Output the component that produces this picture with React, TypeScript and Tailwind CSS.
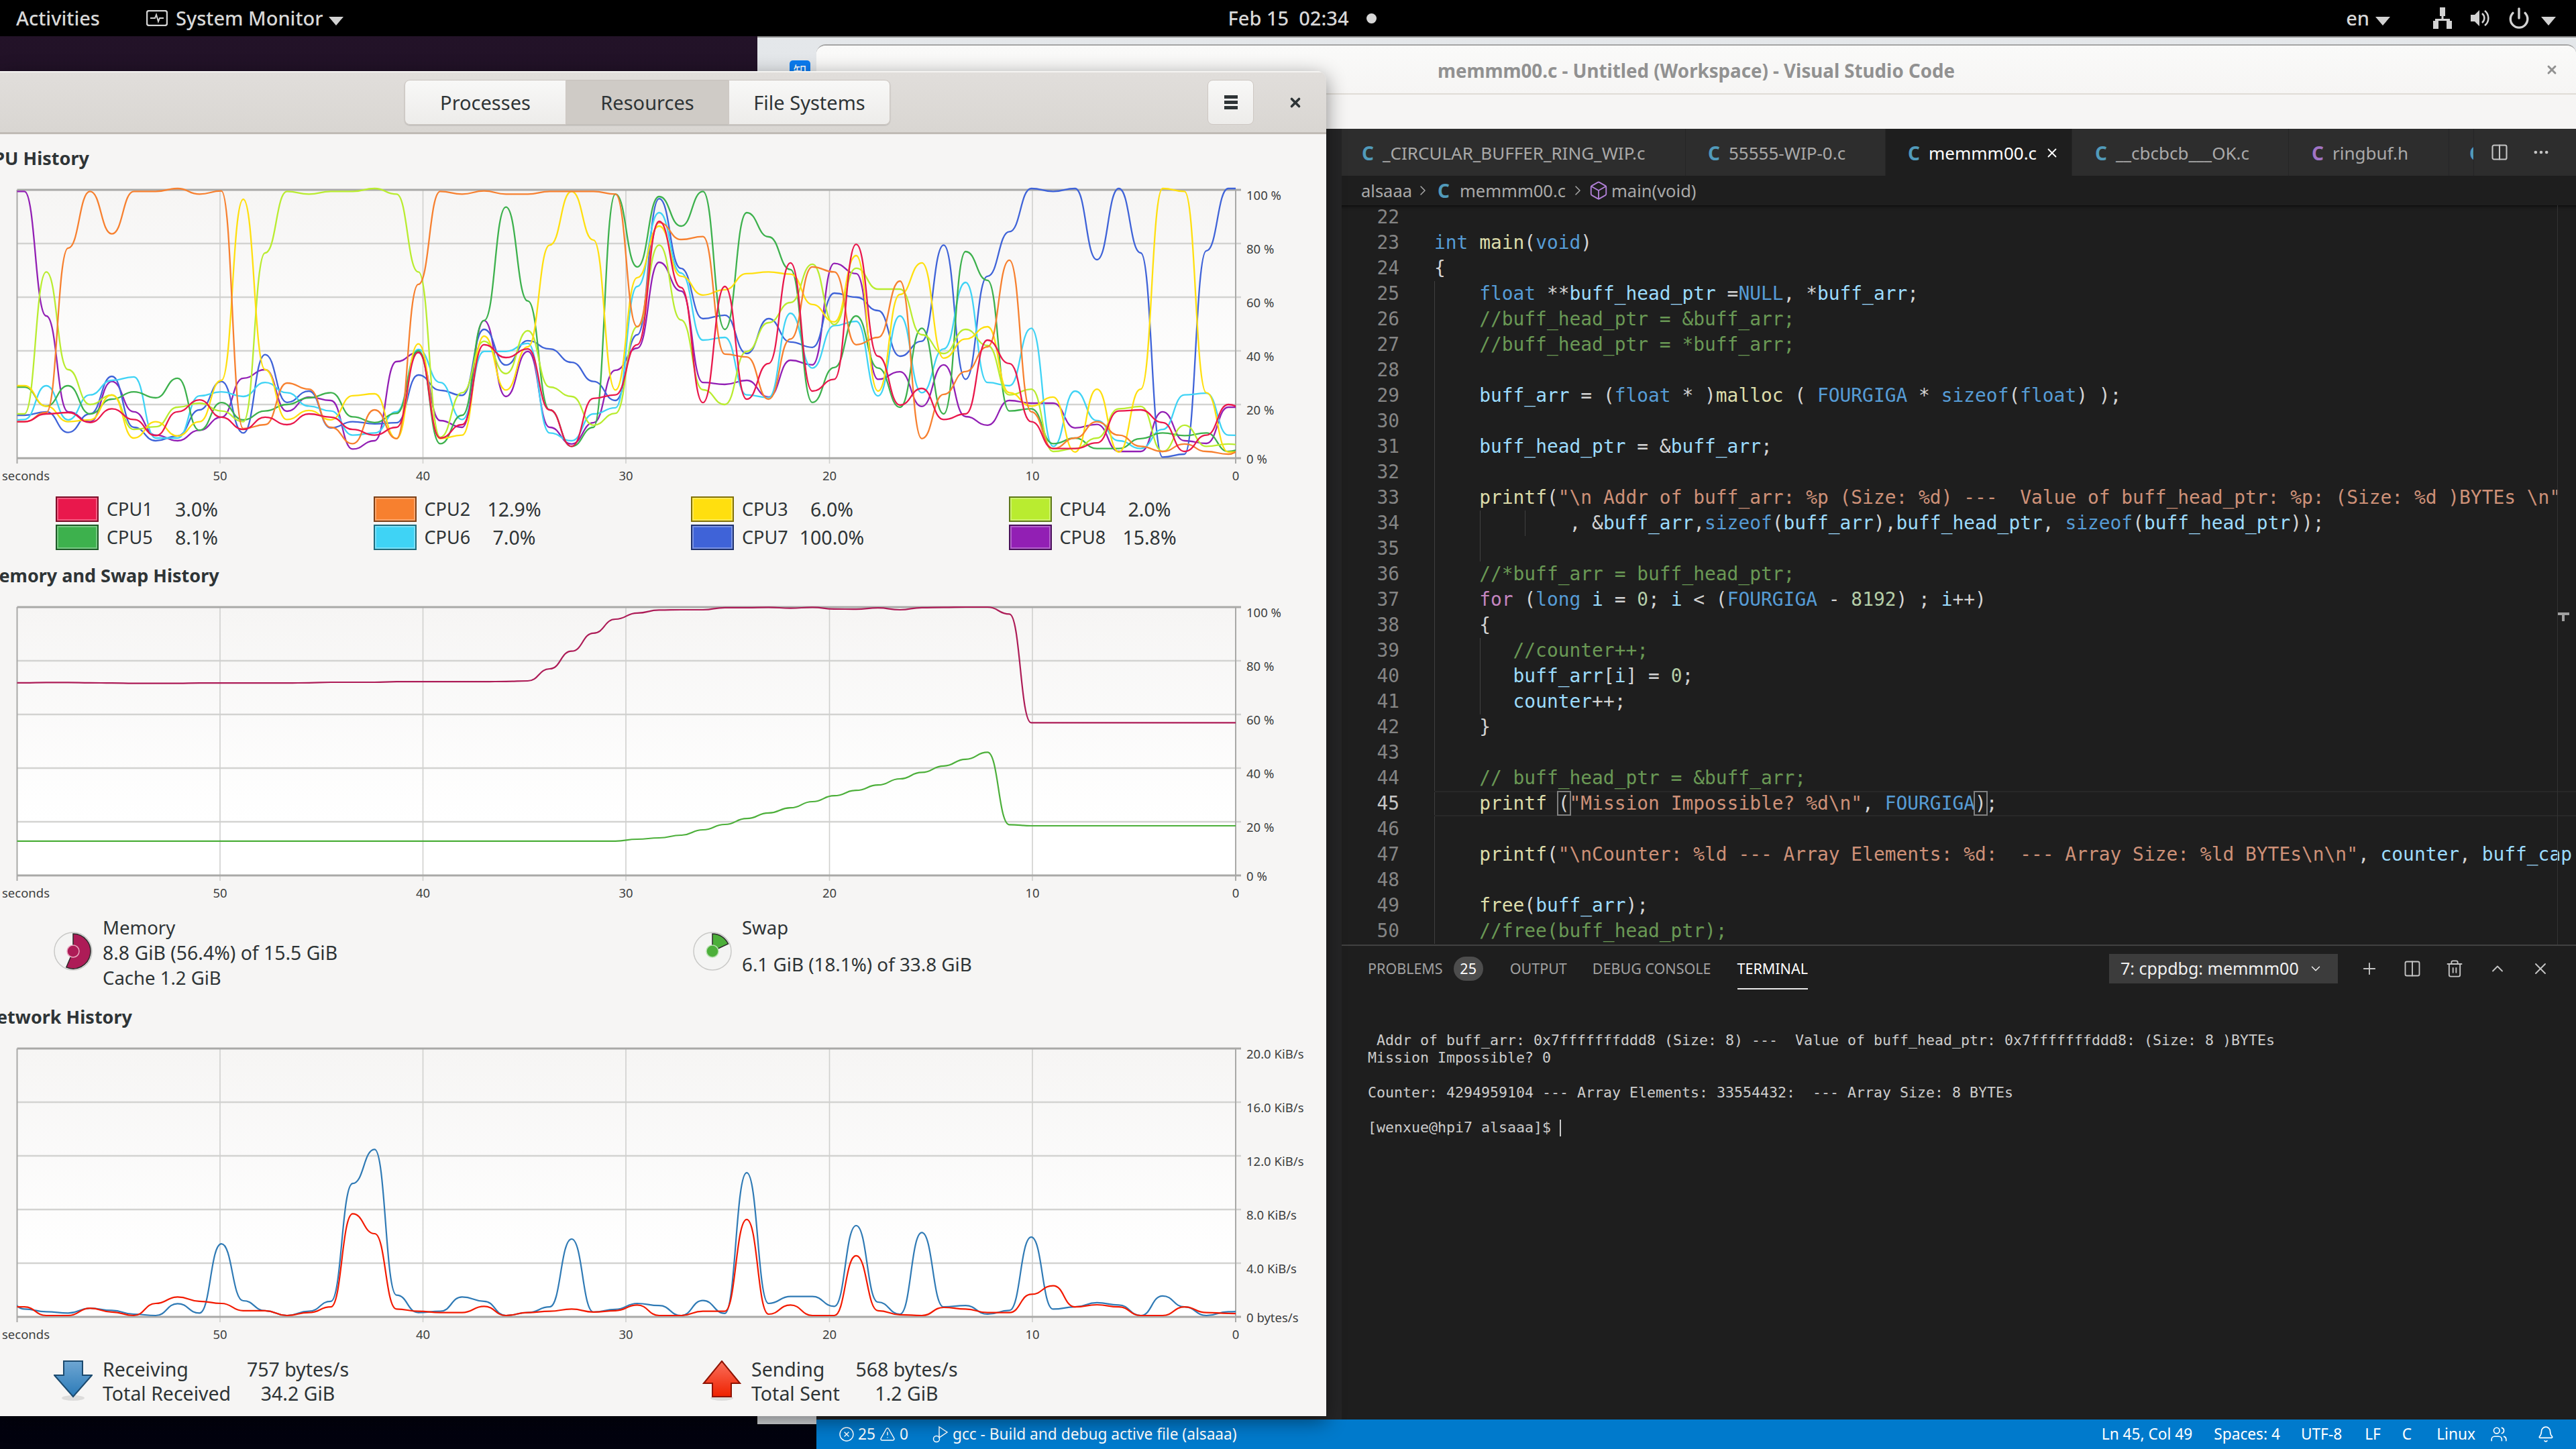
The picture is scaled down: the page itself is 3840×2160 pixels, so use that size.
import { Bell, Box, ChevronDown, ChevronRight, ChevronUp, CircleX, Columns2, Ellipsis, Plus, Power, Trash2, TriangleAlert, Users, X } from "lucide-react";

const cpuSeries = [
  { color: "#921fb4", v: [99.4,99.4,53,17.3,13.6,28.6,17.3,8.6,6.5,10.4,15.3,29.8,33,17.5,22.8,21.5,3.4,6.5,36,39.4,14,11.5,51.3,23,39.8,11.5,5.3,13.2,32.8,41,73,62.3,28.2,27.5,29,22.8,36.5,34.8,72.6,68.8,29.4,32.2,19.3,34.8,15.5,12.3,21.5,20.5,20.5,11.3,12.6,2.5,2.5,17.3,6.5,5.5,19,19] },
  { color: "#3f63d8", v: [16,16,17.3,9.6,16.5,30.5,11.5,6.5,8.3,18,28.6,9.4,38.6,20.8,25,11.3,13.6,12.8,13.2,31,25.3,23.4,48,34.7,43.8,40.7,35.7,28.6,21.5,46,96.7,70.7,52,53.3,39,52,43.3,41.3,61.5,60,55,38,43.6,79.4,29.4,67.8,84.4,100.5,99.4,100.5,74,100.5,76.5,0.4,1.5,77.3,100.5,100.5] },
  { color: "#3fd3f5", v: [13.6,14.4,27,14.3,23.6,29,30.3,7.5,7.5,23.2,24.7,23,28.2,24.4,19.4,17.6,8.6,9.4,17.3,40.5,28.2,14.4,39.8,39.8,42.8,9.4,6.5,16.5,18.8,64,91.5,69,44,45,23.6,22.6,54,33.6,49.4,51,23.2,53,24.4,40.7,65.5,28.2,27,48.4,4.4,25,14,6.5,3.6,10.7,23.6,24.2,8.6,8.2] },
  { color: "#3db14d", v: [26.5,26.5,19.4,27,16.5,22,24.7,22.5,29.8,10.4,20.7,14.3,17.6,20,22.5,24.4,15.4,13.3,16.7,40,5.4,16,51.3,93.6,58.6,18,4.4,11.5,98.4,71.3,97.5,86.5,99.4,48,91.5,82.5,70.3,20.8,33.8,53,33.6,19,48.4,16.5,77,66.3,17.6,18.4,5.4,7.5,3.6,3.6,7.3,9.4,8.4,9.4,2.5,4.4] },
  { color: "#b9ec30", v: [16.5,16.5,69.4,33,20,23.5,10.7,11.7,19,20.5,17.6,13.6,76.5,99.4,98.4,99.4,99.4,100.5,98.4,69.4,7.8,24.4,43.6,31.5,47.5,26.5,23,12.3,16.7,49,79.4,51.5,25.5,20,39.8,50.5,58,72.3,49.8,70.8,63,63,46,39,48,42,23.6,25.7,2.5,3.6,7.5,18.4,19.3,2.5,12.3,4.4,5.3,4.4] },
  { color: "#ffdf0f", v: [27,27,19.4,13.6,14.3,23.6,7.5,13.6,8.3,13.6,29,96.5,33,14.4,17.8,14.3,23.3,24,7.3,42.6,7.3,8.6,45.5,25.4,41.5,79.4,99.4,81.3,25.4,67.3,86.5,67.8,60.8,62.8,68.8,69.4,68.6,57.3,50.8,75.5,25,61,72.8,37.3,44.4,49,24.4,19.4,22.8,2.3,25.7,2.3,25.7,100.5,99.4,24.4,2.3,2.3] },
  { color: "#f7802f", v: [13.6,13.6,17,78.3,99.4,83.6,99.4,99.4,100.5,98.4,99.6,11,12.5,28,25.7,11.5,5.4,18,7.3,64.8,99.4,98.4,99.6,98.4,98.4,99.4,99.4,99.4,98.4,49,87.8,81.5,82.6,38.8,37.7,22,44.4,71.3,69.4,42.3,45,66,7.3,23.8,32.3,41.5,73.8,17.3,3.6,7.5,13.6,8.6,4.4,2.5,5.3,2.5,1.5,5.6] },
  { color: "#e9184c", v: [13.6,13.6,16.5,17,13.3,18.4,14.4,8.4,17.3,21.7,15.3,10.7,15.3,12.5,16.5,15.3,10.7,8.6,11.5,39.4,7.5,12.5,42.3,37.5,40.7,18,4.4,22.3,23.6,42.3,88.3,63.6,20.7,64,22,35.3,72.8,25,29.4,79.7,38,19.8,26,14.4,16.5,44,35.3,13.6,3.6,3.6,5.7,17.6,18,13.3,2.5,8.6,20,17] },
];

const memoryValues = [71.8,71.8,71.9,71.9,71.8,71.7,71.6,71.6,71.6,71.7,71.7,71.7,71.7,71.7,71.8,72,72,72,72.2,72.2,72.2,72.2,72.2,72.3,72.5,77,83.6,90.3,95.5,97.8,98.9,99,99,99.8,99.8,99.9,99.6,99.9,99.3,99.2,99.7,99,99.8,99.9,100,100,97.4,56.9,56.9,56.9,56.9,56.9,56.9,56.9,56.9,56.9,56.9,56.9];
const swapValues = [12.8,12.8,12.8,12.8,12.8,12.8,12.8,12.8,12.8,12.8,12.8,12.8,12.8,12.8,12.8,12.8,12.8,12.8,12.8,12.8,12.8,12.8,12.8,12.8,12.8,12.8,12.8,12.8,12.8,13.5,14,15,17,19,21.2,23.3,25.2,27.5,29.7,31.7,33.7,36,38.4,40.8,43.3,45.9,18.9,18.5,18.5,18.5,18.5,18.5,18.5,18.5,18.5,18.5,18.5,18.5];
const recvValues = [8.9,2.9,1.9,1.4,3.2,2.4,1,0.5,4.9,1.4,27.2,6,2.3,0.5,2.1,5.8,49.7,62.4,8.1,1.6,2.1,7.4,5.8,0.5,1.6,3.7,29,1.8,2.8,5,4.2,0.5,6.1,1.3,53.7,5,7.6,7.6,3.9,34,5.5,1,31.4,3.7,4.2,1,2.4,29.7,2.9,3.7,5.3,4.4,0.5,7.8,3.7,0.5,1.9,2.3];
const sentValues = [3.7,3.7,0.5,0.5,3.2,1.8,0.5,5,7.4,5.8,5,2.3,2.3,0.5,1.6,3.7,38.4,31,2.9,2.1,1.6,1.6,3.9,0.5,1.6,2.1,2.9,1.8,2.3,4.4,0.5,0.5,2.1,2.1,36.3,1,4.4,0.5,0.5,22.8,2.3,0.8,0.5,3.5,2.9,1.6,1.6,8.4,11.6,3.7,4.5,3.7,0.5,0.5,3.7,1.6,1.3,1];

const curvePath = (values: number[]) => {
  const dx = 32.63;
  let d = "";
  values.forEach((v, i) => {
    const x = 3.7 + dx * i;
    const y = 400 - v * 4;
    if (i === 0) {
      d = `M${x} ${y}`;
    } else {
      const px = x - dx;
      const py = 400 - values[i - 1] * 4;
      d += ` C${px + dx / 2} ${py} ${x - dx / 2} ${y} ${x} ${y}`;
    }
  });
  return d;
};

const Chart = ({ id, labels, series, width }: { id: string; labels: string[]; series: { color: string; v: number[] }[]; width: number }) => {
  const vlines = [25.5, 328, 630.5, 933, 1236.5, 1539, 1842];
  const times = ["60 seconds", "50", "40", "30", "20", "10", "0"];
  return (
    <svg width="1977" height="440" className="block overflow-visible shrink-0">
      <defs>
        <linearGradient id={`bg-${id}`} x1="0" y1="0" x2="0" y2="1">
          <stop offset="0" stopColor="#f6f5f4" />
          <stop offset="0.8" stopColor="#ffffff" />
        </linearGradient>
        <clipPath id={`clip-${id}`}>
          <rect x="25.5" y="-12" width="1816.5" height="424" />
        </clipPath>
      </defs>
      <rect x="25.5" y="0" width="1816.5" height="400" fill={`url(#bg-${id})`} />
      {[80, 160, 240, 320].map((y) => (
        <line key={y} x1="25.5" x2="1850" y1={y} y2={y} stroke="#d3d3d1" strokeWidth="2.5" />
      ))}
      {vlines.slice(1, 6).map((x) => (
        <line key={x} x1={x} x2={x} y1="0" y2="408" stroke="#d0d0ce" strokeWidth="1.6" />
      ))}
      <line x1="25.5" x2="25.5" y1="0" y2="408" stroke="#a9a9a7" strokeWidth="2" />
      <line x1="1842" x2="1842" y1="0" y2="408" stroke="#a9a9a7" strokeWidth="2" />
      <line x1="25.5" x2="1850" y1="0" y2="0" stroke="#a9a9a7" strokeWidth="3" />
      <line x1="25.5" x2="1850" y1="400" y2="400" stroke="#a9a9a7" strokeWidth="3" />
      <g clipPath={`url(#clip-${id})`}>
        {series.map((s) => (
          <path key={s.color} d={curvePath(s.v)} fill="none" stroke={s.color} strokeWidth={width} />
        ))}
      </g>
      {labels.map((t, i) => (
        <text key={t} x="1858" y={i === 5 ? 408 : 15 + i * 80} fontSize="18.5" fill="#3d3f40">
          {t}
        </text>
      ))}
      {times.map((t, i) => (
        <text key={t} x={vlines[i]} y="433" fontSize="18.5" fill="#3d3f40" textAnchor="middle">
          {t}
        </text>
      ))}
    </svg>
  );
};

const Heading = ({ children }: { children: string }) => (
  <div className="h-[83px] shrink-0 pb-[11px] -ml-[27px] flex items-center font-bold text-[27px] text-[#2e3436] whitespace-nowrap">{children}</div>
);

const legend = [
  { name: "CPU1", val: "3.0%", fill: "bg-[#e9184c]", dark: "border-[#7c0d28]", light: "border-[#f25d82]" },
  { name: "CPU2", val: "12.9%", fill: "bg-[#f7802f]", dark: "border-[#7c4017]", light: "border-[#f9a66d]" },
  { name: "CPU3", val: "6.0%", fill: "bg-[#ffdf0f]", dark: "border-[#807008]", light: "border-[#ffe957]" },
  { name: "CPU4", val: "2.0%", fill: "bg-[#b9ec30]", dark: "border-[#5d7618]", light: "border-[#cef26e]" },
  { name: "CPU5", val: "8.1%", fill: "bg-[#3db14d]", dark: "border-[#1e5927]", light: "border-[#77c983]" },
  { name: "CPU6", val: "7.0%", fill: "bg-[#3fd3f5]", dark: "border-[#206a7b]", light: "border-[#79e0f8]" },
  { name: "CPU7", val: "100.0%", fill: "bg-[#3f63d8]", dark: "border-[#20326c]", light: "border-[#7992e4]" },
  { name: "CPU8", val: "15.8%", fill: "bg-[#921fb4]", dark: "border-[#49105a]", light: "border-[#b362cb]" },
];

const Pie = ({ color, ring, angle }: { color: string; ring: string; angle: number }) => {
  const r = 26;
  const a = (angle * Math.PI) / 180;
  const ex = 29 + r * Math.sin(a);
  const ey = 29 - r * Math.cos(a);
  return (
    <svg width="58" height="58" viewBox="0 0 58 58" className="shrink-0">
      <circle cx="29" cy="29" r="28" fill="#f4f4f3" stroke="#c9c9c7" strokeWidth="1.5" />
      <path d={`M29 29 L29 3 A${r} ${r} 0 ${angle > 180 ? 1 : 0} 1 ${ex} ${ey} Z`} fill={color} stroke="#2b2b2b" strokeWidth="1.5" />
      <circle cx="29" cy="29" r="9" fill={color} stroke={ring} strokeWidth="1.5" />
    </svg>
  );
};

const Arrow = ({ down }: { down: boolean }) => (
  <svg width="58" height="62" viewBox="0 0 58 62" className="shrink-0">
    <defs>
      <linearGradient id={down ? "arrow-d" : "arrow-u"} x1="0" y1="0" x2="0" y2="1">
        <stop offset="0" stopColor={down ? "#6ea6d2" : "#f9705c"} />
        <stop offset="1" stopColor={down ? "#2b7ab8" : "#ef2100"} />
      </linearGradient>
    </defs>
    <ellipse cx="29" cy="56" rx="17" ry="4" fill="#000000" opacity="0.1" />
    {down ? (
      <path d="M15 1 H43 V22 H57 L29 54 L1 22 H15 Z" fill="url(#arrow-d)" stroke="#1c4a6e" strokeWidth="2" />
    ) : (
      <path d="M29 1 L56 34 H43 V54 H15 V34 H2 Z" fill="url(#arrow-u)" stroke="#8e1200" strokeWidth="2" />
    )}
  </svg>
);

const SystemMonitorWindow = () => (
  <div className="absolute left-0 top-[106px] w-[1977px] h-[2005px] flex flex-col overflow-hidden rounded-tr-[14px] bg-[#f6f5f4] shadow-[0_8px_30px_rgba(0,0,0,0.45)]">
    <div className="h-[94px] shrink-0 flex items-center pl-[603px] border-t-2 border-b-[3px] border-t-[#f5f4f2] border-b-[#c0bbb5] bg-gradient-to-b from-[#e1dedb] to-[#d9d6d2] text-[29px] text-[#2e3436]">
      <div className="flex h-[67px] shadow-[0_1px_2px_rgba(0,0,0,0.18)] rounded-[8px]">
        <div className="w-[241px] flex items-center justify-center rounded-l-[8px] border border-[#cdc7c2] bg-gradient-to-b from-[#f8f8f7] to-[#edecea]">Processes</div>
        <div className="w-[242px] flex items-center justify-center border-y border-[#c6c1bc] bg-[#cfcbc6]">Resources</div>
        <div className="w-[241px] flex items-center justify-center rounded-r-[8px] border border-[#cdc7c2] bg-gradient-to-b from-[#f8f8f7] to-[#edecea]">File Systems</div>
      </div>
      <div className="ml-[473px] w-[69px] h-[67px] flex flex-col items-center justify-center gap-[3px] rounded-[8px] border border-[#cdc7c2] bg-gradient-to-b from-[#f8f8f7] to-[#edecea]">
        <span className="block w-[20px] h-[5px] bg-[#2e3436]" />
        <span className="block w-[20px] h-[5px] bg-[#2e3436]" />
        <span className="block w-[20px] h-[5px] bg-[#2e3436]" />
      </div>
      <X className="ml-[51px] text-[#2e3436]" size={22} strokeWidth={4} />
    </div>

    <Heading>CPU History</Heading>
    <Chart id="cpu" width={2.3} series={cpuSeries} labels={["100 %", "80 %", "60 %", "40 %", "20 %", "0 %"]} />
    <div className="grid grid-cols-[473.5px_473.5px_473.5px_473.5px] shrink-0 pl-[83px] pt-[17px] gap-y-[2px] h-[99px] text-[27px] text-[#2e3436]">
      {legend.map((c) => (
        <div key={c.name} className="flex items-center h-[38px]">
          <div className={`w-[64px] h-[38px] shrink-0 border-2 ${c.dark}`}>
            <div className={`w-full h-full border-2 ${c.light} ${c.fill}`} />
          </div>
          <span className="w-[81px] ml-[12px]">{c.name}</span>
          <span className="w-[106px] text-center text-[28.5px]">{c.val}</span>
        </div>
      ))}
    </div>

    <Heading>Memory and Swap History</Heading>
    <Chart id="mem" width={2.2} series={[{ color: "#ad1c57", v: memoryValues }, { color: "#4caf3a", v: swapValues }]} labels={["100 %", "80 %", "60 %", "40 %", "20 %", "0 %"]} />
    <div className="h-[135px] shrink-0 pt-[19px] flex text-[27.5px] leading-[37.5px] text-[#2e3436]">
      <div className="w-[1033px] pl-[80px] flex items-start gap-[15px]">
        <div className="mt-[25px]">
          <Pie color="#ad1c57" ring="#e8a9c0" angle={203} />
        </div>
        <div className="flex flex-col">
          <span>Memory</span>
          <span className="text-[28.4px]">8.8 GiB (56.4%) of 15.5 GiB</span>
          <span>Cache 1.2 GiB</span>
        </div>
      </div>
      <div className="flex items-start gap-[15px]">
        <div className="mt-[25px]">
          <Pie color="#4caf3a" ring="#b5dfae" angle={65} />
        </div>
        <div className="flex flex-col">
          <span>Swap</span>
          <span className="mt-[17px] text-[27.8px]">6.1 GiB (18.1%) of 33.8 GiB</span>
        </div>
      </div>
    </div>

    <Heading>Network History</Heading>
    <Chart id="net" width={2.2} series={[{ color: "#2f7ab5", v: recvValues }, { color: "#f21a00", v: sentValues }]} labels={["20.0 KiB/s", "16.0 KiB/s", "12.0 KiB/s", "8.0 KiB/s", "4.0 KiB/s", "0 bytes/s"]} />
    <div className="pt-[20px] shrink-0 flex text-[28.5px] leading-[36px] text-[#2e3436] whitespace-nowrap">
      <div className="w-[1047px] pl-[80px] flex items-start">
        <div className="mt-[5px] mr-[15px]">
          <Arrow down />
        </div>
        <div className="grid grid-cols-[217px_148px]">
          <span>Receiving</span>
          <span className="flex justify-center">757 bytes/s</span>
          <span>Total Received</span>
          <span className="flex justify-center">34.2 GiB</span>
        </div>
      </div>
      <div className="flex items-start">
        <div className="mt-[5px] mr-[15px]">
          <Arrow down={false} />
        </div>
        <div className="grid grid-cols-[156px_151px]">
          <span>Sending</span>
          <span className="flex justify-center">568 bytes/s</span>
          <span>Total Sent</span>
          <span className="flex justify-center">1.2 GiB</span>
        </div>
      </div>
    </div>
  </div>
);

const kw = "text-[#569cd6]";
const fn = "text-[#dcdcaa]";
const vr = "text-[#9cdcfe]";
const cm = "text-[#6a9955]";
const st = "text-[#ce9178]";
const nm = "text-[#b5cea8]";
const pl = "text-[#d4d4d4]";
const ct = "text-[#c586c0]";
const br = "text-[#d4d4d4] outline-2 outline-[#7f7f7f]";

type Tok = [string, string];
const code: Record<number, Tok[]> = {
  23: [["int", kw], [" ", pl], ["main", fn], ["(", pl], ["void", kw], [")", pl]],
  24: [["{", pl]],
  25: [["    ", pl], ["float", kw], [" **", pl], ["buff_head_ptr", vr], [" =", pl], ["NULL", kw], [", *", pl], ["buff_arr", vr], [";", pl]],
  26: [["    //buff_head_ptr = &buff_arr;", cm]],
  27: [["    //buff_head_ptr = *buff_arr;", cm]],
  29: [["    ", pl], ["buff_arr", vr], [" = (", pl], ["float", kw], [" * )", pl], ["malloc", fn], [" ( ", pl], ["FOURGIGA", kw], [" * ", pl], ["sizeof", kw], ["(", pl], ["float", kw], [") );", pl]],
  31: [["    ", pl], ["buff_head_ptr", vr], [" = &", pl], ["buff_arr", vr], [";", pl]],
  33: [["    ", pl], ["printf", fn], ["(", pl], ['"\\n Addr of buff_arr: %p (Size: %d) ---  Value of buff_head_ptr: %p: (Size: %d )BYTEs \\n"', st]],
  34: [["            , &", pl], ["buff_arr", vr], [",", pl], ["sizeof", kw], ["(", pl], ["buff_arr", vr], ["),", pl], ["buff_head_ptr", vr], [", ", pl], ["sizeof", kw], ["(", pl], ["buff_head_ptr", vr], ["));", pl]],
  36: [["    //*buff_arr = buff_head_ptr;", cm]],
  37: [["    ", pl], ["for", ct], [" (", pl], ["long", kw], [" ", pl], ["i", vr], [" = ", pl], ["0", nm], ["; ", pl], ["i", vr], [" < (", pl], ["FOURGIGA", kw], [" - ", pl], ["8192", nm], [") ; ", pl], ["i", vr], ["++)", pl]],
  38: [["    {", pl]],
  39: [["       //counter++;", cm]],
  40: [["       ", pl], ["buff_arr", vr], ["[", pl], ["i", vr], ["] = ", pl], ["0", nm], [";", pl]],
  41: [["       ", pl], ["counter", vr], ["++;", pl]],
  42: [["    }", pl]],
  44: [["    // buff_head_ptr = &buff_arr;", cm]],
  45: [["    ", pl], ["printf", fn], [" ", pl], ["(", br], ['"Mission Impossible? %d\\n"', st], [", ", pl], ["FOURGIGA", kw], [")", br], [";", pl]],
  47: [["    ", pl], ["printf", fn], ["(", pl], ['"\\nCounter: %ld --- Array Elements: %d:  --- Array Size: %ld BYTEs\\n\\n"', st], [", ", pl], ["counter", vr], [", ", pl], ["buff_cap", vr]],
  49: [["    ", pl], ["free", fn], ["(", pl], ["buff_arr", vr], [");", pl]],
  50: [["    //free(buff_head_ptr);", cm]],
};

const guideLeft = ["left-0", "left-[67.5px]", "left-[135px]"];
const guideCount = (n: number) => {
  if (n < 25) return 0;
  if (n === 34) return 3;
  if (n === 35 || (n >= 39 && n <= 41)) return 2;
  return 1;
};

const lineNumbers = Array.from({ length: 29 }, (_, i) => 22 + i);

const Editor = () => (
  <div className="relative h-[1102px] overflow-hidden bg-[#1e1e1e] font-['DejaVu_Sans_Mono'] text-[27.9px] leading-[38px] shadow-[inset_0_6px_6px_-6px_#000]">
    <div className="-mt-px">
      {lineNumbers.map((n) => (
        <div key={n} className="flex h-[38px]">
          <span className={`w-[86px] shrink-0 text-right ${n === 45 ? "text-[#c6c6c6]" : "text-[#858585]"}`}>{n}</span>
          <div className={`relative flex-1 ml-[52px] whitespace-pre ${n === 45 ? "border-y-2 border-[#282828] leading-[34px]" : ""}`}>
            {Array.from({ length: guideCount(n) }, (_, g) => (
              <span key={g} className={`absolute top-0 h-full w-px bg-[#404040] ${guideLeft[g]}`} />
            ))}
            {(code[n] || []).map(([t, c], i) => (
              <span key={i} className={c}>
                {t}
              </span>
            ))}
          </div>
        </div>
      ))}
    </div>
    <div className="absolute right-[27px] top-0 h-full w-px bg-[#333333]" />
    <div className="absolute right-[10px] top-[607px] w-[17px] h-[4px] bg-[#a0a0a0]" />
    <div className="absolute right-[17px] top-[607px] w-[4px] h-[13px] bg-[#a0a0a0]" />
  </div>
);

const tabs = [
  { name: "_CIRCULAR_BUFFER_RING_WIP.c", w: "w-[513px]", pad: "pl-[30px]", icon: "text-[#519aba]" },
  { name: "55555-WIP-0.c", w: "w-[298px]", pad: "pl-[33px]", icon: "text-[#519aba]" },
  { name: "memmm00.c", w: "w-[278px]", pad: "pl-[33px]", icon: "text-[#519aba]", active: true },
  { name: "__cbcbcb___OK.c", w: "w-[323px]", pad: "pl-[34px]", icon: "text-[#519aba]" },
  { name: "ringbuf.h", w: "w-[239px]", pad: "pl-[34px]", icon: "text-[#a074c4]" },
];

const TabBar = () => (
  <div className="h-[70px] flex shrink-0 bg-[#252526] text-[26px]">
    {tabs.map((t) => (
      <div key={t.name} className={`${t.w} ${t.pad} pt-[2px] flex items-center shrink-0 border-r border-[#252526] ${t.active ? "bg-[#1e1e1e] text-white" : "bg-[#2d2d2d] text-[#a9a9a9]"}`}>
        <span className={`w-[31px] font-bold text-[28px] ${t.icon}`}>C</span>
        <span className="whitespace-nowrap">{t.name}</span>
        {t.active && <X className="ml-[12px] text-white" size={22} strokeWidth={2} />}
      </div>
    ))}
    <div className="w-[37px] pl-[30px] pt-[2px] overflow-hidden flex items-center bg-[#2d2d2d] border-r border-[#252526]">
      <span className="font-bold text-[#519aba] text-[28px]">C</span>
    </div>
    <div className="flex-1 flex items-center bg-[#2d2d2d] text-[#c5c5c5]">
      <Columns2 className="ml-[24px]" size={28} strokeWidth={1.8} />
      <Ellipsis className="ml-[34px]" size={28} strokeWidth={2} />
    </div>
  </div>
);

const Breadcrumb = () => (
  <div className="h-[44px] flex items-center pl-[29px] shrink-0 bg-[#1e1e1e] text-[25.5px] text-[#a9a9a9]">
    <span>alsaaa</span>
    <ChevronRight className="ml-[4px] w-[24px]" size={24} strokeWidth={1.5} />
    <span className="ml-[10px] w-[33px] font-bold text-[28px] text-[#519aba]">C</span>
    <span>memmm00.c</span>
    <ChevronRight className="ml-[6px]" size={24} strokeWidth={1.5} />
    <Box className="ml-[4px] text-[#b180d7]" size={30} strokeWidth={1.5} />
    <span className="ml-[4px]">main(void)</span>
  </div>
);

const Panel = () => (
  <div className="flex-1 flex flex-col bg-[#1e1e1e] border-t-2 border-[#414141]">
    <div className="h-[68px] flex items-center pl-[39px] text-[21.5px] text-[#a0a0a0] shrink-0 relative">
      <span>PROBLEMS</span>
      <span className="ml-[16px] w-[44px] h-[36px] rounded-full bg-[#4d4d4d] text-white flex items-center justify-center">25</span>
      <span className="ml-[40px]">OUTPUT</span>
      <span className="ml-[38px]">DEBUG CONSOLE</span>
      <span className="ml-[39px] text-white relative">
        TERMINAL
        <span className="absolute left-0 right-0 -bottom-[15px] h-[2px] bg-[#e7e7e7]" />
      </span>
      <div className="ml-[449px] w-[341px] h-[44px] bg-[#3c3c3c] flex items-center pl-[17px] text-[25px] text-[#f0f0f0] whitespace-nowrap">
        7: cppdbg: memmm00
        <ChevronDown className="ml-[14px]" size={22} strokeWidth={1.6} />
      </div>
      <div className="flex items-center text-[#c5c5c5]">
        <Plus className="ml-[33px]" size={28} strokeWidth={1.6} />
        <Columns2 className="ml-[36px]" size={28} strokeWidth={1.6} />
        <Trash2 className="ml-[35px]" size={28} strokeWidth={1.6} />
        <ChevronUp className="ml-[36px]" size={28} strokeWidth={1.6} />
        <X className="ml-[36px]" size={28} strokeWidth={1.6} />
      </div>
    </div>
    <div className="pt-[60px] pl-[39px] font-['DejaVu_Sans_Mono'] text-[21.6px] leading-[26px] text-[#cccccc] whitespace-pre">
      <div>{" Addr of buff_arr: 0x7fffffffddd8 (Size: 8) ---  Value of buff_head_ptr: 0x7fffffffddd8: (Size: 8 )BYTEs"}</div>
      <div>Mission Impossible? 0</div>
      <div className="h-[26px]" />
      <div>{"Counter: 4294959104 --- Array Elements: 33554432:  --- Array Size: 8 BYTEs"}</div>
      <div className="h-[26px]" />
      <div className="flex items-center">
        {"[wenxue@hpi7 alsaaa]$ "}
        <span className="inline-block w-[2px] h-[25px] bg-[#cccccc]" />
      </div>
    </div>
  </div>
);

const StatusBar = () => (
  <div className="h-[44px] shrink-0 flex items-center bg-[#007acc] text-white text-[22.7px] whitespace-nowrap">
    <CircleX className="ml-[33px]" size={24} strokeWidth={1.5} />
    <span className="ml-[5px]">25</span>
    <TriangleAlert className="ml-[6px]" size={24} strokeWidth={1.5} />
    <span className="ml-[6px]">0</span>
    <svg className="ml-[36px]" width="26" height="28" viewBox="0 0 26 28" fill="none" stroke="white" strokeWidth="1.5">
      <path d="M10 3 L22 11 L10 19 Z" />
      <circle cx="6" cy="21" r="4.5" />
    </svg>
    <span className="ml-[4px]">gcc - Build and debug active file (alsaaa)</span>
    <span className="ml-auto">Ln 45, Col 49</span>
    <span className="ml-[32px]">Spaces: 4</span>
    <span className="ml-[31px]">UTF-8</span>
    <span className="ml-[34px]">LF</span>
    <span className="ml-[32px]">C</span>
    <span className="ml-[37px]">Linux</span>
    <Users className="ml-[22px]" size={26} strokeWidth={1.5} />
    <Bell className="ml-[44px] mr-[32px]" size={26} strokeWidth={1.5} />
  </div>
);

const VSCodeWindow = () => (
  <div className="absolute left-[1217px] right-0 top-[66px] bottom-0 flex flex-col overflow-hidden rounded-t-[14px] border-t-2 border-[#a5a5a5] bg-[#f6f5f4]">
    <div className="h-[73px] shrink-0 relative flex items-center pl-[926px] pt-[4px] border-b-2 border-[#e0dcd6] bg-gradient-to-b from-[#fafaf9] to-[#f6f5f4] text-[27.7px] font-bold text-[#919191]">
      memmm00.c - Untitled (Workspace) - Visual Studio Code
      <X className="absolute right-[26px] top-[26px] text-[#919191]" size={20} strokeWidth={3.5} />
    </div>
    <div className="h-[51px] shrink-0" />
    <div className="flex-1 flex min-h-0">
      <div className="w-[783px] shrink-0 bg-[#252526]" />
      <div className="flex-1 flex flex-col min-w-0">
        <TabBar />
        <Breadcrumb />
        <Editor />
        <Panel />
      </div>
    </div>
    <StatusBar />
  </div>
);

const Caret = () => <span className="inline-block w-0 h-0 border-x-[11px] border-t-[13px] border-x-transparent border-t-[#d2d2d2]" />;

const TopBar = () => (
  <div className="h-[54px] flex items-center bg-black pl-[24px] text-[29px] font-medium text-[#d8d8d8] whitespace-nowrap">
    <span>Activities</span>
    <svg className="ml-[69px]" width="32" height="24" viewBox="0 0 32 24">
      <rect x="1" y="1" width="30" height="22" rx="3" fill="none" stroke="#d2d2d2" strokeWidth="2.5" />
      <path d="M6 12 H13 L15 7 L18 17 L20 12 H26" fill="none" stroke="#d2d2d2" strokeWidth="2" />
    </svg>
    <span className="ml-[12px]">System Monitor</span>
    <span className="ml-[8px]"><Caret /></span>
    <span className="ml-[1319px]">Feb 15&nbsp; 02:34</span>
    <span className="ml-[26px] w-[15px] h-[15px] rounded-full bg-[#d8d8d8]" />
    <span className="ml-auto">en</span>
    <span className="ml-[9px]"><Caret /></span>
    <svg className="ml-[63px]" width="30" height="32" viewBox="0 0 30 32" fill="#d2d2d2">
      <rect x="11" y="0" width="8" height="13" />
      <rect x="13.5" y="13" width="3" height="5" />
      <rect x="4" y="17" width="22" height="3" />
      <rect x="1" y="20" width="8" height="12" />
      <rect x="21" y="20" width="8" height="12" />
    </svg>
    <svg className="ml-[25px]" width="30" height="30" viewBox="0 0 30 30" fill="#d2d2d2">
      <path d="M2 10 H8 L15 3 V27 L8 20 H2 Z" />
      <path d="M19 8 A9 9 0 0 1 19 22 M23 4 A14 14 0 0 1 23 26" fill="none" stroke="#d2d2d2" strokeWidth="2.5" />
    </svg>
    <Power className="ml-[27px]" size={34} strokeWidth={2.4} color="#d2d2d2" />
    <span className="ml-[16px] mr-[30px]"><Caret /></span>
  </div>
);

const App = () => (
  <div className="relative w-[3840px] h-[2160px] overflow-hidden bg-gradient-to-b from-[#241329] via-[#0b0716] to-[#02020e] font-['Noto_Sans',sans-serif]">
    <TopBar />
    <div className="absolute left-[1129px] right-0 top-[54px] h-[2069px] border-t-2 border-[#8f8f8f] bg-gradient-to-b from-[#e4e7ea] to-[#d9dcdf]">
      <div className="absolute left-[48px] top-[34px] w-[31px] h-[31px] rounded-[5px] bg-[#0b7cf1] text-white text-[20px] leading-[31px] text-center font-['Noto_Sans_CJK_SC',sans-serif]">知</div>
    </div>
    <VSCodeWindow />
    <SystemMonitorWindow />
  </div>
);

export default App;
